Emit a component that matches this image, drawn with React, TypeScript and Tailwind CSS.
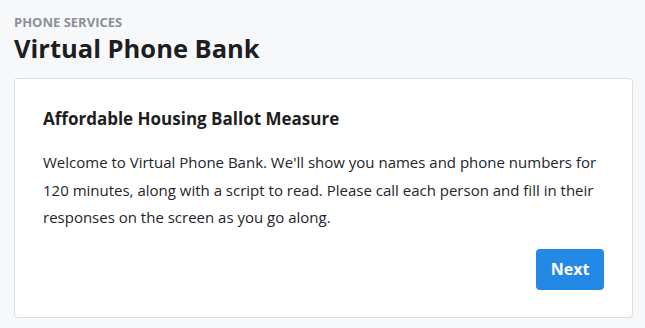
import React from "react";

const App = () => {
  return (
    <div
      className="min-h-[328px] bg-[#f7f8fa] pl-[14px] pr-[12px] pt-[14px] pb-[10px]"
      style={{ fontFamily: "'Open Sans', Lato, sans-serif" }}
    >
      {/* Page header */}
      <div className="text-[13px] font-bold uppercase leading-[17px] text-[#8a9099]">
        Phone Services
      </div>
      <h1 className="mt-[1px] text-[25.5px] font-bold leading-[32px] text-[#1c1e22]">
        Virtual Phone Bank
      </h1>

      {/* Card */}
      <div className="mt-[14px] rounded-[4px] border border-[#dcdfe3] bg-white px-[28px] pt-[28px] pb-[27px]">
        <h2 className="text-[17px] font-bold leading-[24px] text-[#1c1e22]">
          Affordable Housing Ballot Measure
        </h2>
        <p className="mt-[18px] text-[15px] leading-[27.5px] text-[#23252a]">
          Welcome to Virtual Phone Bank. We'll show you names and phone numbers for 120 minutes,
          along with a script to read. Please call each person and fill in their responses on the
          screen as you go along.
        </p>
        <div className="mt-[17px] flex justify-end">
          <button className="h-[41px] w-[68px] rounded-[4px] bg-[#2489e4] text-[16px] font-bold text-white">
            Next
          </button>
        </div>
      </div>
    </div>
  );
};

export default App;
